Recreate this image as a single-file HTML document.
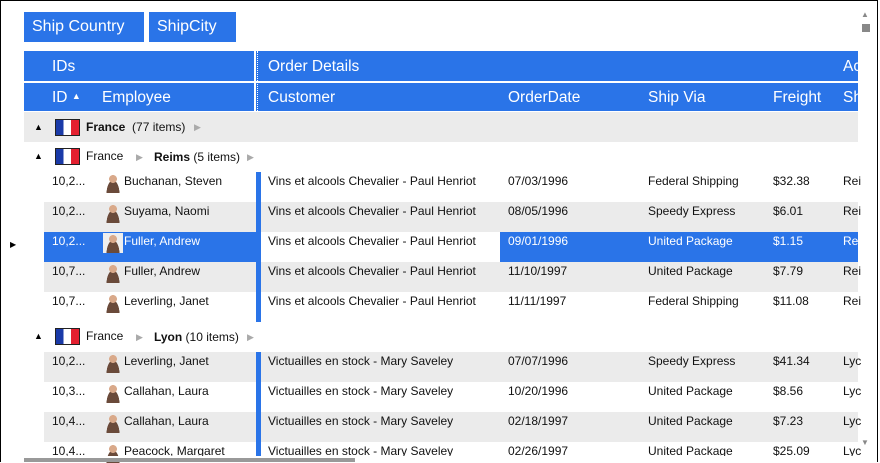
<!DOCTYPE html>
<html><head><meta charset="utf-8"><style>
*{margin:0;padding:0;box-sizing:border-box}
body{width:880px;height:462px;overflow:hidden;background:#fff;font-family:"Liberation Sans",sans-serif;position:relative}
.a{position:absolute;white-space:nowrap}
.frame{left:0;top:0;width:878px;height:462px;border:1px solid #000;border-bottom:none}
.btn{background:#2a74e8;color:#fff;font-size:16px;line-height:30px;padding-left:8px;top:12px;height:30px}
.hd{background:#2a74e8;left:24px;width:834px}
.ht{color:#fff;font-size:15.5px}
.t{font-size:12px;color:#111}
.flag{width:25px;height:17px;border:1px solid #222;background:linear-gradient(90deg,#1a3aa8 0 33%,#fff 33% 66%,#e42030 66%)}
.ph{width:20px;height:20px;background:radial-gradient(circle at 50% 30%,#d9a98a 0 22%,transparent 24%),radial-gradient(ellipse at 50% 105%,#6a4a3a 0 45%,transparent 47%)}
.bar{left:256px;width:5px;background:#2a74e8}
.caret{font-size:9px}
.chev{color:#aaa;font-size:9px}
</style></head><body>
<div class="a frame"></div>
<div class="a btn" style="left:24px;width:120px">Ship Country</div>
<div class="a btn" style="left:149px;width:87px">ShipCity</div>

<div class="a hd" style="top:51px;height:30px"></div>
<div class="a hd" style="top:83px;height:28px"></div>
<div class="a" style="left:24px;top:81px;width:834px;height:2px;background:#fff"></div>
<div class="a" style="left:254px;top:51px;width:2px;height:60px;background:#fff"></div>
<div class="a" style="left:257px;top:51px;width:1px;height:60px;border-left:1px dotted #fff"></div>
<div class="a ht" style="left:52px;top:58px">IDs</div>
<div class="a ht" style="left:268px;top:58px">Order Details</div>
<div class="a ht" style="left:843px;top:58px">Ac</div>
<div class="a ht" style="left:52px;top:89px">ID <span style="font-size:9px;vertical-align:3px">&#9650;</span></div>
<div class="a ht" style="left:102px;top:89px">Employee</div>
<div class="a ht" style="left:268px;top:89px">Customer</div>
<div class="a ht" style="left:508px;top:89px">OrderDate</div>
<div class="a ht" style="left:648px;top:89px">Ship Via</div>
<div class="a ht" style="left:773px;top:89px">Freight</div>
<div class="a ht" style="left:843px;top:89px">Sh</div>

<div class="a" style="left:24px;top:112px;width:834px;height:30px;background:#ebebeb"></div>
<div class="a caret" style="left:34px;top:122px">&#9650;</div>
<div class="a flag" style="left:55px;top:119px"></div>
<div class="a t" style="left:86px;top:120px"><b>France</b> &nbsp;(77 items)</div>
<div class="a chev" style="left:194px;top:122px">&#9654;</div>

<div class="a caret" style="left:34px;top:151px">&#9650;</div>
<div class="a flag" style="left:55px;top:148px"></div>
<div class="a t" style="left:86px;top:149px">France</div>
<div class="a chev" style="left:136px;top:152px">&#9654;</div>
<div class="a t" style="left:154px;top:150px"><b>Reims</b> (5 items)</div>
<div class="a chev" style="left:247px;top:152px">&#9654;</div>

<div class="a caret" style="left:34px;top:331px">&#9650;</div>
<div class="a flag" style="left:55px;top:328px"></div>
<div class="a t" style="left:86px;top:329px">France</div>
<div class="a chev" style="left:136px;top:332px">&#9654;</div>
<div class="a t" style="left:154px;top:330px"><b>Lyon</b> (10 items)</div>
<div class="a chev" style="left:247px;top:332px">&#9654;</div>

<div class="a" style="left:44px;top:202px;width:814px;height:30px;background:#ebebeb"></div>
<div class="a" style="left:44px;top:232px;width:212px;height:30px;background:#2a74e8"></div>
<div class="a" style="left:500px;top:232px;width:358px;height:30px;background:#2a74e8"></div>
<div class="a" style="left:44px;top:262px;width:814px;height:30px;background:#ebebeb"></div>
<div class="a" style="left:44px;top:352px;width:814px;height:30px;background:#ebebeb"></div>
<div class="a" style="left:44px;top:412px;width:814px;height:30px;background:#ebebeb"></div>
<div class="a bar" style="top:172px;height:150px"></div>
<div class="a bar" style="top:352px;height:104px"></div>
<div class="a" style="left:10px;top:240px;font-size:8px">&#9654;</div>

<div class="a t" style="left:52px;top:174px">10,2...</div><div class="a ph" style="left:103px;top:173px"></div><div class="a t" style="left:124px;top:174px">Buchanan, Steven</div><div class="a t" style="left:268px;top:174px">Vins et alcools Chevalier - Paul Henriot</div><div class="a t" style="left:508px;top:174px">07/03/1996</div><div class="a t" style="left:648px;top:174px">Federal Shipping</div><div class="a t" style="left:773px;top:174px">$32.38</div><div class="a t" style="left:843px;top:174px">Rei</div>
<div class="a t" style="left:52px;top:204px">10,2...</div><div class="a ph" style="left:103px;top:203px"></div><div class="a t" style="left:124px;top:204px">Suyama, Naomi</div><div class="a t" style="left:268px;top:204px">Vins et alcools Chevalier - Paul Henriot</div><div class="a t" style="left:508px;top:204px">08/05/1996</div><div class="a t" style="left:648px;top:204px">Speedy Express</div><div class="a t" style="left:773px;top:204px">$6.01</div><div class="a t" style="left:843px;top:204px">Rei</div>
<div class="a t" style="left:52px;top:234px;color:#fff">10,2...</div><div class="a ph" style="left:103px;top:233px;background-color:#eee"></div><div class="a t" style="left:124px;top:234px;color:#fff">Fuller, Andrew</div><div class="a t" style="left:268px;top:234px">Vins et alcools Chevalier - Paul Henriot</div><div class="a t" style="left:508px;top:234px;color:#fff">09/01/1996</div><div class="a t" style="left:648px;top:234px;color:#fff">United Package</div><div class="a t" style="left:773px;top:234px;color:#fff">$1.15</div><div class="a t" style="left:843px;top:234px;color:#fff">Rei</div>
<div class="a t" style="left:52px;top:264px">10,7...</div><div class="a ph" style="left:103px;top:263px"></div><div class="a t" style="left:124px;top:264px">Fuller, Andrew</div><div class="a t" style="left:268px;top:264px">Vins et alcools Chevalier - Paul Henriot</div><div class="a t" style="left:508px;top:264px">11/10/1997</div><div class="a t" style="left:648px;top:264px">United Package</div><div class="a t" style="left:773px;top:264px">$7.79</div><div class="a t" style="left:843px;top:264px">Rei</div>
<div class="a t" style="left:52px;top:294px">10,7...</div><div class="a ph" style="left:103px;top:293px"></div><div class="a t" style="left:124px;top:294px">Leverling, Janet</div><div class="a t" style="left:268px;top:294px">Vins et alcools Chevalier - Paul Henriot</div><div class="a t" style="left:508px;top:294px">11/11/1997</div><div class="a t" style="left:648px;top:294px">Federal Shipping</div><div class="a t" style="left:773px;top:294px">$11.08</div><div class="a t" style="left:843px;top:294px">Rei</div>

<div class="a t" style="left:52px;top:354px">10,2...</div><div class="a ph" style="left:103px;top:353px"></div><div class="a t" style="left:124px;top:354px">Leverling, Janet</div><div class="a t" style="left:268px;top:354px">Victuailles en stock - Mary Saveley</div><div class="a t" style="left:508px;top:354px">07/07/1996</div><div class="a t" style="left:648px;top:354px">Speedy Express</div><div class="a t" style="left:773px;top:354px">$41.34</div><div class="a t" style="left:843px;top:354px">Lyc</div>
<div class="a t" style="left:52px;top:384px">10,3...</div><div class="a ph" style="left:103px;top:383px"></div><div class="a t" style="left:124px;top:384px">Callahan, Laura</div><div class="a t" style="left:268px;top:384px">Victuailles en stock - Mary Saveley</div><div class="a t" style="left:508px;top:384px">10/20/1996</div><div class="a t" style="left:648px;top:384px">United Package</div><div class="a t" style="left:773px;top:384px">$8.56</div><div class="a t" style="left:843px;top:384px">Lyc</div>
<div class="a t" style="left:52px;top:414px">10,4...</div><div class="a ph" style="left:103px;top:413px"></div><div class="a t" style="left:124px;top:414px">Callahan, Laura</div><div class="a t" style="left:268px;top:414px">Victuailles en stock - Mary Saveley</div><div class="a t" style="left:508px;top:414px">02/18/1997</div><div class="a t" style="left:648px;top:414px">United Package</div><div class="a t" style="left:773px;top:414px">$7.23</div><div class="a t" style="left:843px;top:414px">Lyc</div>
<div class="a t" style="left:52px;top:444px">10,4...</div><div class="a ph" style="left:103px;top:443px"></div><div class="a t" style="left:124px;top:444px">Peacock, Margaret</div><div class="a t" style="left:268px;top:444px">Victuailles en stock - Mary Saveley</div><div class="a t" style="left:508px;top:444px">02/26/1997</div><div class="a t" style="left:648px;top:444px">United Package</div><div class="a t" style="left:773px;top:444px">$25.09</div><div class="a t" style="left:843px;top:444px">Lyc</div>

<div class="a" style="left:1px;top:456px;width:876px;height:6px;background:#fff"></div>
<div class="a" style="left:24px;top:458px;width:331px;height:4px;background:#999"></div>
<div class="a" style="left:861px;top:10px;font-size:8px;color:#888">&#9650;</div>
<div class="a" style="left:862px;top:24px;width:8px;height:8px;background:#888"></div>
<div class="a" style="left:861px;top:438px;font-size:8px;color:#888">&#9660;</div>
</body></html>
